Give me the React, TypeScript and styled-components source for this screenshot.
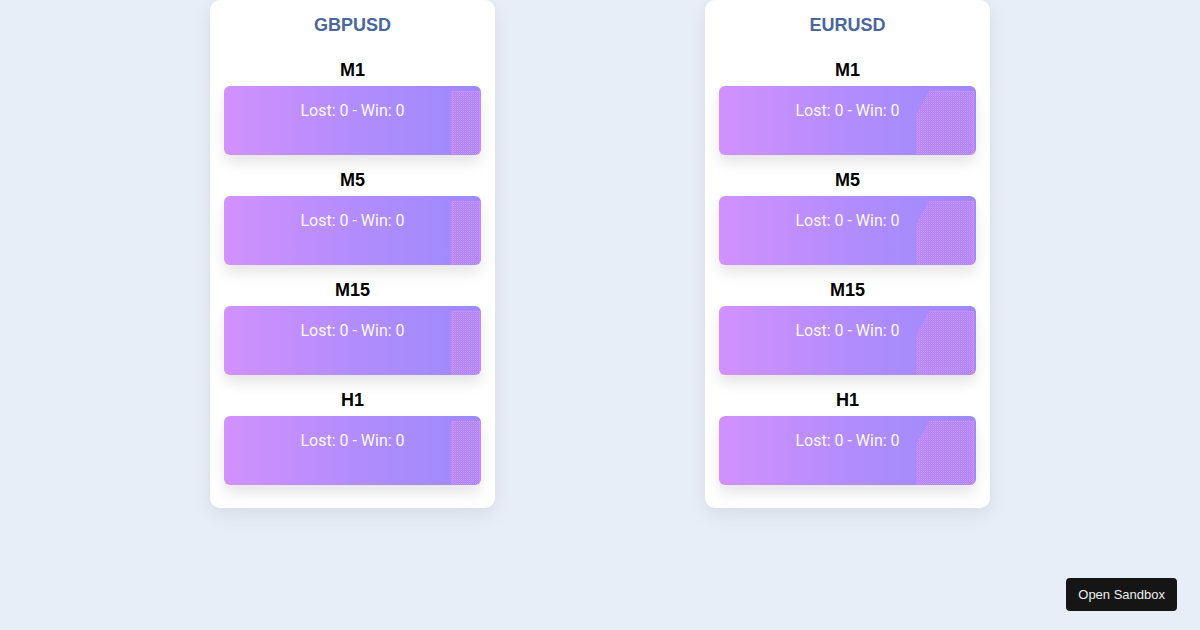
import styled, { createGlobalStyle } from "styled-components";

const GlobalStyle = createGlobalStyle`
  html, body {
    margin: 0;
    padding: 0;
    background: #e8eef8;
    font-family: "Liberation Sans", Arial, sans-serif;
  }
`;

const pairs = [
  { name: "GBPUSD", shape: "flat" as const },
  { name: "EURUSD", shape: "slant" as const },
];

const frames = ["M1", "M5", "M15", "H1"];

const Sparkle = ({ shape }: { shape: "flat" | "slant" }) => {
  const id = `dots-${shape}`;
  const points =
    shape === "flat" ? "1,0 29,0 29,64 1,64" : "14,0 60,0 60,64 1,64 1,24";
  return (
    <Overlay width={shape === "flat" ? 30 : 61} height={65}>
      <defs>
        <pattern id={id} width="2" height="2" patternUnits="userSpaceOnUse">
          <rect width="1" height="1" fill="#f08cf6" />
          <rect x="1" y="1" width="1" height="1" fill="#f08cf6" opacity="0.5" />
        </pattern>
      </defs>
      <polygon points={points} fill={`url(#${id})`} opacity="0.85" />
      <polyline
        points={shape === "flat" ? "1,64 1,0 29,0 29,64" : "14,0 58,0 58,64"}
        fill="none"
        stroke="#ef8af5"
        strokeWidth="1"
        opacity="0.8"
      />
    </Overlay>
  );
};

export default function App() {
  return (
    <>
      <GlobalStyle />
      <Page>
        {pairs.map((p) => (
          <Card key={p.name}>
            <Title>{p.name}</Title>
            {frames.map((f) => (
              <Frame key={f}>
                <FrameLabel>{f}</FrameLabel>
                <StatBox>
                  <StatText>Lost: 0 - Win: 0</StatText>
                  <Sparkle shape={p.shape} />
                </StatBox>
              </Frame>
            ))}
          </Card>
        ))}
      </Page>
      <SandboxButton>Open Sandbox</SandboxButton>
    </>
  );
}

const Page = styled.div`
  display: flex;
  justify-content: center;
  align-items: flex-start;
  gap: 210px;
  min-height: 630px;
`;

const Card = styled.section`
  width: 285px;
  box-sizing: border-box;
  background: #fff;
  border-radius: 10px;
  padding: 14px 14px 23px;
  box-shadow: 0 6px 20px rgba(0, 0, 0, 0.08);
`;

const Title = styled.h2`
  margin: 0 0 23px;
  text-align: center;
  font-size: 18px;
  font-weight: 700;
  color: #4a679c;
  line-height: 22px;
`;

const Frame = styled.div`
  display: flex;
  flex-direction: column;
  margin-bottom: 14px;

  &:last-child {
    margin-bottom: 0;
  }
`;

const FrameLabel = styled.div`
  text-align: center;
  font-size: 18px;
  font-weight: 700;
  color: #000;
  line-height: 22px;
  margin-bottom: 5px;
`;

const StatBox = styled.div`
  position: relative;
  height: 69px;
  border-radius: 6px;
  overflow: hidden;
  background: linear-gradient(90deg, #d291fd 0%, #b08cfc 55%, #9b8afb 100%);
  box-shadow: 0 8px 14px rgba(0, 0, 0, 0.1);
  display: flex;
  justify-content: center;
`;

const StatText = styled.div`
  margin-top: 15px;
  color: #fff;
  font-family: Roboto, "Liberation Sans", Arial, sans-serif;
  font-size: 16px;
  line-height: 20px;
  opacity: 0.95;
`;

const Overlay = styled.svg`
  position: absolute;
  right: 0;
  top: 5px;
`;

const SandboxButton = styled.button`
  position: fixed;
  right: 23px;
  bottom: 19px;
  height: 33px;
  padding: 0 12px;
  background: #151515;
  color: #eee;
  border: none;
  border-radius: 4px;
  font-family: "Liberation Sans", Arial, sans-serif;
  font-size: 13px;
`;
